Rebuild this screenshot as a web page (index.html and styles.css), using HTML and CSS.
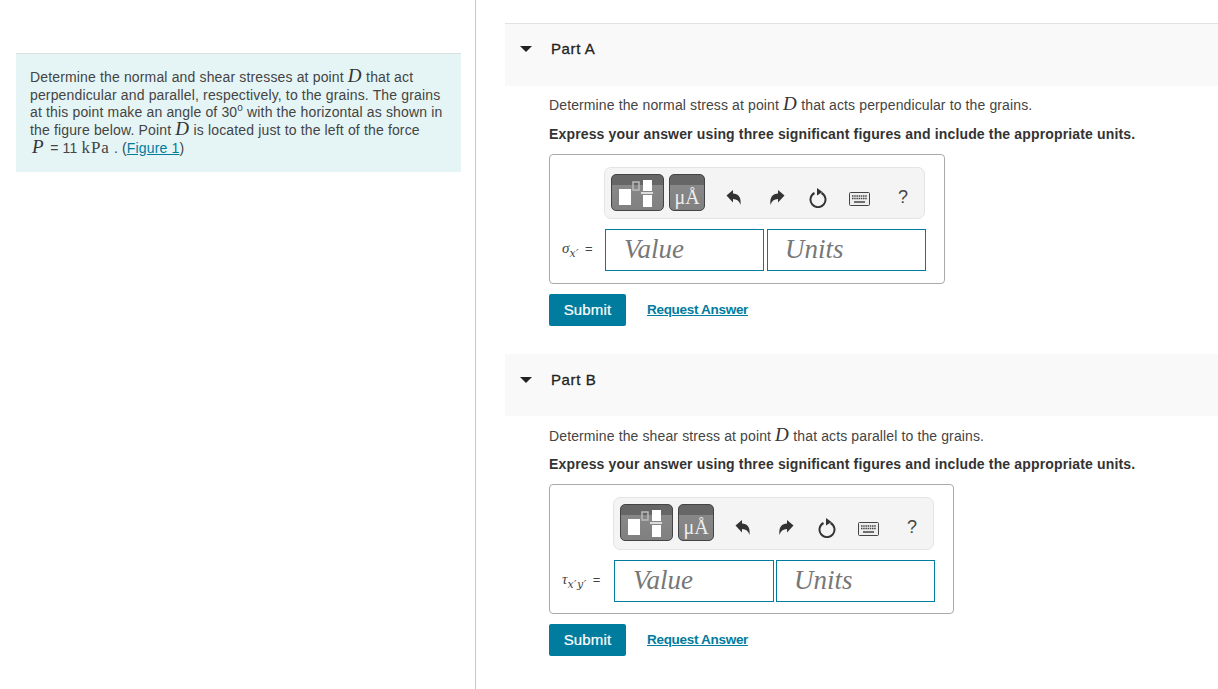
FILE: index.html
```html
<!DOCTYPE html>
<html lang="en">
  <head>
    <meta charset="UTF-8">
    <title>Parts A and B</title>
    <link rel="stylesheet" href="styles.css">
  </head>
  <body>
    <div class="left-col">
      <div class="intro">
        Determine the normal and shear stresses at point <i class="math">D</i> that act perpendicular and parallel, respectively, to the grains. The grains at this point make an angle of 30<sup class="deg">o</sup> with the horizontal as shown in the figure below. Point <i class="math">D</i> is located just to the left of the force<br>
        <i class="math math-p">P</i> = 11 <span class="unit">kPa</span> . (<a href="#">Figure 1</a>)
      </div>
    </div>

    <div class="right-col">
      <!-- Part A -->
      <div class="part part-a">
        <div class="part-head"><span class="arrow"></span><span class="part-title">Part A</span></div>
        <div class="part-body">
          <p class="question">Determine the normal stress at point <i class="math">D</i> that acts perpendicular to the grains.</p>
          <p class="express">Express your answer using three significant figures and include the appropriate units.</p>
          <div class="answer-box box-a">
            <div class="toolbar">
              <div class="tool-btn btn-frac">
                <svg width="46" height="34" viewBox="0 0 46 34"><rect x="8" y="14" width="12" height="16" fill="#fff"/><rect x="22" y="7" width="6" height="8" fill="none" stroke="#bbb" stroke-width="1.5"/><rect x="32" y="5" width="9" height="11" fill="#fff"/><rect x="30" y="17" width="12" height="2" fill="#ddd"/><rect x="32" y="20" width="9" height="12" fill="#fff"/></svg>
              </div>
              <div class="tool-btn btn-unit"><span class="mu">μÅ</span></div>
              <div class="tool-icons">
                <svg class="ico" width="16" height="17" viewBox="0 0 16 17"><path d="M.5 6.500 7 1v3.500c5 0 8.500 3.500 7.500 11.500-1-4-3.500-6-7.500-6v3.500z" fill="#333"/></svg>
                <svg class="ico" width="16" height="17" viewBox="0 0 16 17"><path d="M15.500 6.500 9 1v3.500c-5 0-8.500 3.500-7.500 11.500 1-4 3.500-6 7.500-6v3.500z" fill="#333"/></svg>
                <svg class="ico" width="18" height="21" viewBox="0 0 18 21"><path d="M5.500 6a7.500 7.500 0 1 0 7 0" fill="none" stroke="#333" stroke-width="2"/><path d="M8 1l5.500 4-5.500 3.500z" fill="#333"/></svg>
                <svg class="ico" width="21" height="14" viewBox="0 0 21 14"><rect x=".5" y=".5" width="20" height="13" rx="1" fill="#eee" stroke="#444"/><path d="M3 4h15M3 6.500h15" stroke="#444" stroke-width="1.500" stroke-dasharray="1.500 .7"/><path d="M5 10h11" stroke="#444" stroke-width="1.500"/></svg>
                <span class="help">?</span>
              </div>
            </div>
            <div class="input-row">
              <span class="label"><i>σ</i><sub><i>x′</i></sub><span class="eq">=</span></span>
              <div class="field field-value">Value</div>
              <div class="field field-units">Units</div>
            </div>
          </div>
          <div class="actions">
            <button class="submit">Submit</button>
            <a href="#" class="request">Request Answer</a>
          </div>
        </div>
      </div>

      <!-- Part B -->
      <div class="part part-b">
        <div class="part-head"><span class="arrow"></span><span class="part-title">Part B</span></div>
        <div class="part-body">
          <p class="question">Determine the shear stress at point <i class="math">D</i> that acts parallel to the grains.</p>
          <p class="express">Express your answer using three significant figures and include the appropriate units.</p>
          <div class="answer-box box-b">
            <div class="toolbar">
              <div class="tool-btn btn-frac">
                <svg width="46" height="34" viewBox="0 0 46 34"><rect x="8" y="14" width="12" height="16" fill="#fff"/><rect x="22" y="7" width="6" height="8" fill="none" stroke="#bbb" stroke-width="1.5"/><rect x="32" y="5" width="9" height="11" fill="#fff"/><rect x="30" y="17" width="12" height="2" fill="#ddd"/><rect x="32" y="20" width="9" height="12" fill="#fff"/></svg>
              </div>
              <div class="tool-btn btn-unit"><span class="mu">μÅ</span></div>
              <div class="tool-icons">
                <svg class="ico" width="16" height="17" viewBox="0 0 16 17"><path d="M.5 6.500 7 1v3.500c5 0 8.500 3.500 7.500 11.500-1-4-3.500-6-7.500-6v3.500z" fill="#333"/></svg>
                <svg class="ico" width="16" height="17" viewBox="0 0 16 17"><path d="M15.500 6.500 9 1v3.500c-5 0-8.500 3.500-7.500 11.500 1-4 3.500-6 7.500-6v3.500z" fill="#333"/></svg>
                <svg class="ico" width="18" height="21" viewBox="0 0 18 21"><path d="M5.500 6a7.500 7.500 0 1 0 7 0" fill="none" stroke="#333" stroke-width="2"/><path d="M8 1l5.500 4-5.500 3.500z" fill="#333"/></svg>
                <svg class="ico" width="21" height="14" viewBox="0 0 21 14"><rect x=".5" y=".5" width="20" height="13" rx="1" fill="#eee" stroke="#444"/><path d="M3 4h15M3 6.500h15" stroke="#444" stroke-width="1.500" stroke-dasharray="1.500 .7"/><path d="M5 10h11" stroke="#444" stroke-width="1.500"/></svg>
                <span class="help">?</span>
              </div>
            </div>
            <div class="input-row">
              <span class="label"><i>τ</i><sub><i>x′y′</i></sub><span class="eq">=</span></span>
              <div class="field field-value">Value</div>
              <div class="field field-units">Units</div>
            </div>
          </div>
          <div class="actions">
            <button class="submit">Submit</button>
            <a href="#" class="request">Request Answer</a>
          </div>
        </div>
      </div>
    </div>
  </body>
</html>
```

FILE: styles.css
```css
html, body {
  margin: 0;
  height: 689px;
  overflow: hidden;
}
body {
  display: flex;
  font-family: "Liberation Sans", Arial, sans-serif;
  font-size: 14px;
  color: #333;
  background-color: #fff;
}
a {
  color: #007c9e;
}
.left-col {
  width: 476px;
  flex: none;
  box-sizing: border-box;
  border-right: 1px solid #c8c8c8;
  padding: 53px 14px 0 16px;
}
.intro {
  background-color: #e5f5f6;
  border-top: 1px solid #d9e0e2;
  padding: 15px 14px 14px;
  line-height: 17.700px;
  font-size: 14px;
  letter-spacing: .15px;
  color: #444;
  height: 119px;
  box-sizing: border-box;
}
.math {
  font-family: "Liberation Serif", serif;
  font-size: 19px;
  line-height: 0;
  letter-spacing: .5px;
  color: #333;
}
.math-p {
  margin-left: 2px;
  margin-right: 2px;
}
.unit {
  font-family: "Liberation Serif", serif;
  font-size: 17px;
  line-height: 0;
  letter-spacing: 1px;
}
.deg {
  font-size: 10px;
  line-height: 0;
}
.right-col {
  flex: 1;
  padding: 23px 0 0 29px;
}
.part-head {
  display: flex;
  height: 62px;
  box-sizing: border-box;
  background-color: #f9f9f9;
  padding-top: 16px;
  font-size: 15px;
  letter-spacing: .6px;
  line-height: 18px;
  color: #222;
  -webkit-text-stroke: .3px #222;
}
.part-a .part-head {
  height: 63px;
  border-top: 1px solid #e2e2e2;
}
.part-a .part-body {
  padding-top: 10px;
}
.part-b {
  margin-top: 28px;
}
.part-b .part-head {
  padding-top: 17px;
}
.arrow {
  width: 0;
  height: 0;
  margin: 6px 19px 0 15px;
  border-left: 6px solid transparent;
  border-right: 6px solid transparent;
  border-top: 6px solid #222;
}
.part-body {
  padding: 11px 0 0 44px;
}
.question {
  margin: 0;
  line-height: 19px;
  font-size: 14px;
  letter-spacing: .12px;
  color: #444;
}
.express {
  margin: 10px 0 0;
  font-weight: bold;
  font-size: 14px;
  letter-spacing: .15px;
  line-height: 18px;
  color: #333;
}
.part-b .express {
  margin-top: 9px;
}
.answer-box {
  box-sizing: border-box;
  height: 130px;
  margin-top: 11px;
  border: 1px solid #aaa;
  border-radius: 4px;
  padding-top: 12px;
}
.box-a {
  width: 396px;
}
.box-b {
  width: 405px;
}
.toolbar {
  display: flex;
  box-sizing: border-box;
  width: 321px;
  height: 52px;
  margin-left: 54px;
  padding: 6px 0 0 6px;
  background-color: #f4f4f4;
  border: 1px solid #e4e4e4;
  border-radius: 7px;
}
.box-b .toolbar {
  height: 53px;
  margin-left: 63px;
}
.tool-btn {
  box-sizing: border-box;
  height: 37px;
  border: 1px solid #444;
  border-radius: 5px;
  background: linear-gradient(#666 0, #666 30%, #888 30%, #808080 100%);
}
.btn-frac {
  width: 53px;
}
.btn-frac svg {
  display: block;
  margin-left: -1px;
}
.btn-unit {
  width: 36px;
  margin-left: 5px;
  text-align: center;
}
.mu {
  font-family: "Liberation Serif", serif;
  font-size: 20px;
  line-height: 44px;
  color: #eee;
}
.tool-icons {
  display: flex;
  align-items: center;
  height: 37px;
  margin-top: 5px;
  padding-left: 21px;
}
.ico:nth-child(2) {
  margin-left: 27px;
}
.ico:nth-child(3) {
  margin-left: 24px;
}
.ico:nth-child(4) {
  margin-left: 22px;
  margin-top: 2px;
}
.help {
  margin-left: 28px;
  margin-top: -1px;
  font-size: 18px;
  color: #444;
}
.input-row {
  display: flex;
  align-items: center;
  margin-top: 10px;
}
.label {
  font-family: "Liberation Serif", serif;
  font-size: 15px;
  color: #444;
  box-sizing: border-box;
  width: 55px;
  padding-left: 12px;
  white-space: nowrap;
}
.box-b .label {
  width: 64px;
}
.label sub {
  font-family: "DejaVu Serif", serif;
  font-size: 11px;
  letter-spacing: .5px;
}
.eq {
  font-family: "Liberation Sans", sans-serif;
  font-size: 13px;
  margin-left: 6px;
}
.field {
  box-sizing: border-box;
  height: 42px;
  border: 1px solid #007c9e;
  font-family: "Liberation Serif", serif;
  font-style: italic;
  font-size: 27px;
  line-height: 38px;
  color: #777;
  padding-left: 18px;
}
.field-value {
  width: 160px;
}
.box-a .field-value {
  width: 159px;
}
.field-units {
  width: 159px;
  margin-left: 3px;
  padding-left: 17px;
}
.box-b .field-units {
  margin-left: 2px;
}
.actions {
  display: flex;
  align-items: center;
  margin-top: 10px;
}
.submit {
  width: 77px;
  height: 32px;
  padding: 0 0 2px;
  background-color: #007c9e;
  border: 0;
  border-radius: 2px;
  color: #fff;
  font-family: "Liberation Sans", Arial, sans-serif;
  font-size: 15px;
  letter-spacing: .15px;
  -webkit-text-stroke: .2px #fff;
}
.request {
  margin-left: 21px;
  margin-top: -2px;
  font-size: 13.500px;
  font-weight: bold;
  letter-spacing: -.3px;
}
```
